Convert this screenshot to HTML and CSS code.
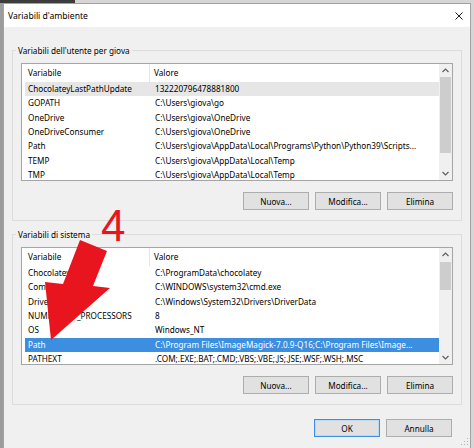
FILE: index.html
```html
<!DOCTYPE html>
<html lang="it">
<head>
<meta charset="utf-8">
<title>Variabili d'ambiente</title>
<link rel="stylesheet" href="styles.css">
</head>
<body>
<div class="window">
  <div class="titlebar">
    <span class="title">Variabili d'ambiente</span>
    <svg class="close" width="8" height="8" viewBox="0 0 8 8"><path d="M0.5 0.5 L7.5 7.5 M7.5 0.5 L0.5 7.5" stroke="#1a1a1a" stroke-width="1" fill="none"/></svg>
  </div>
  <div class="content">
    <fieldset class="group">
      <legend>Variabili dell'utente per giova</legend>
      <div class="list">
        <div class="rows">
          <div class="row head"><span class="c1">Variabile</span><span class="c2">Valore</span></div>
          <div class="row inactive"><span class="c1">ChocolateyLastPathUpdate</span><span class="c2">132220796478881800</span></div>
          <div class="row"><span class="c1">GOPATH</span><span class="c2">C:\Users\giova\go</span></div>
          <div class="row"><span class="c1">OneDrive</span><span class="c2">C:\Users\giova\OneDrive</span></div>
          <div class="row"><span class="c1">OneDriveConsumer</span><span class="c2">C:\Users\giova\OneDrive</span></div>
          <div class="row"><span class="c1">Path</span><span class="c2">C:\Users\giova\AppData\Local\Programs\Python\Python39\Scripts...</span></div>
          <div class="row"><span class="c1">TEMP</span><span class="c2">C:\Users\giova\AppData\Local\Temp</span></div>
          <div class="row"><span class="c1">TMP</span><span class="c2">C:\Users\giova\AppData\Local\Temp</span></div>
        </div>
        <div class="sb">
          <div class="sb-arrow"><svg width="7" height="5" viewBox="0 0 7 5"><polyline points="0.5,4 3.5,1 6.5,4" fill="none" stroke="#606060" stroke-width="1.2"/></svg></div>
          <div class="sb-track"><div class="sb-thumb" style="margin-top:0px;height:76px"></div></div>
          <div class="sb-arrow"><svg width="7" height="5" viewBox="0 0 7 5"><polyline points="0.5,1 3.5,4 6.5,1" fill="none" stroke="#606060" stroke-width="1.2"/></svg></div>
        </div>
      </div>
      <div class="btnrow">
        <button class="btn">Nuova...</button>
        <button class="btn">Modifica...</button>
        <button class="btn">Elimina</button>
      </div>
    </fieldset>

    <fieldset class="group group2">
      <legend>Variabili di sistema</legend>
      <div class="list">
        <div class="rows">
          <div class="row head"><span class="c1">Variabile</span><span class="c2">Valore</span></div>
          <div class="row"><span class="c1">ChocolateyInstall</span><span class="c2">C:\ProgramData\chocolatey</span></div>
          <div class="row"><span class="c1">ComSpec</span><span class="c2">C:\WINDOWS\system32\cmd.exe</span></div>
          <div class="row"><span class="c1">DriverData</span><span class="c2">C:\Windows\System32\Drivers\DriverData</span></div>
          <div class="row"><span class="c1">NUMBER_OF_PROCESSORS</span><span class="c2">8</span></div>
          <div class="row"><span class="c1">OS</span><span class="c2">Windows_NT</span></div>
          <div class="row sel"><span class="c1">Path</span><span class="c2">C:\Program Files\ImageMagick-7.0.9-Q16;C:\Program Files\Image...</span></div>
          <div class="row"><span class="c1">PATHEXT</span><span class="c2">.COM;.EXE;.BAT;.CMD;.VBS;.VBE;.JS;.JSE;.WSF;.WSH;.MSC</span></div>
        </div>
        <div class="sb">
          <div class="sb-arrow"><svg width="7" height="5" viewBox="0 0 7 5"><polyline points="0.5,4 3.5,1 6.5,4" fill="none" stroke="#606060" stroke-width="1.2"/></svg></div>
          <div class="sb-track"><div class="sb-thumb" style="margin-top:1px;height:28px"></div></div>
          <div class="sb-arrow"><svg width="7" height="5" viewBox="0 0 7 5"><polyline points="0.5,1 3.5,4 6.5,1" fill="none" stroke="#606060" stroke-width="1.2"/></svg></div>
        </div>
      </div>
      <div class="btnrow">
        <button class="btn">Nuova...</button>
        <button class="btn">Modifica...</button>
        <button class="btn">Elimina</button>
      </div>
    </fieldset>

    <div class="footer">
      <button class="btn default">OK</button>
      <button class="btn">Annulla</button>
    </div>
  </div>
</div>

<svg class="grip" width="8" height="8" viewBox="0 0 8 8">
  <rect x="6" y="0" width="1" height="1" fill="#b0b0b0"/>
  <rect x="3" y="3" width="1" height="1" fill="#b0b0b0"/>
  <rect x="6" y="3" width="1" height="1" fill="#b0b0b0"/>
  <rect x="0" y="6" width="1" height="1" fill="#b0b0b0"/>
  <rect x="3" y="6" width="1" height="1" fill="#b0b0b0"/>
  <rect x="6" y="6" width="1" height="1" fill="#b0b0b0"/>
</svg>

<div class="step">4</div>
<svg class="arrow" width="75" height="110" viewBox="0 0 75 110">
  <polygon points="40,5 67,16 53,51 70,53 11,105 5,47 23,49" fill="#e8141e"/>
</svg>
</body>
</html>
```

FILE: styles.css
```css
html, body {
  margin: 0;
  padding: 0;
}

body {
  width: 474px;
  height: 448px;
  overflow: hidden;
  position: relative;
  background:
    linear-gradient(#3c3c3c, #3c3c3c) 0 0 / 75px 3px no-repeat,
    linear-gradient(#9c9c9c, #9c9c9c) 0 0 / 3px 100% no-repeat,
    #d6d6d6;
  font-family: "Noto Sans", "DejaVu Sans", sans-serif;
  font-size: 8.2px;
  color: #000;
}

.window {
  margin: 3px 0 0 3px;
  width: 468px;
  height: 445px;
  box-sizing: border-box;
  border: 1px solid #a2a2a2;
  border-bottom: 0;
  background: #f0f0f0;
  display: flex;
  flex-direction: column;
}

.titlebar {
  height: 23px;
  flex: none;
  background: #fff;
  display: flex;
  align-items: center;
  justify-content: space-between;
  padding-left: 4px;
}

.title {
  font-size: 8.6px;
  color: #000;
}

.close {
  margin-right: 7px;
  display: block;
}

.content {
  padding: 17px 8px 0 8px;
}

.group {
  margin: 0;
  border: 1px solid #dcdcdc;
  padding: 6px 8px 10px 8px;
  min-width: 0;
}

.group2 {
  margin-top: 7px;
}

.group legend {
  padding: 0 2px;
  margin-left: -5px;
  line-height: 13px;
  font-size: 8.2px;
}

.list {
  display: flex;
  height: 118px;
  box-sizing: border-box;
  border: 1px solid #a5a5a5;
  background: #fff;
}

.rows {
  flex: 1;
  min-width: 0;
  overflow: hidden;
}

.row {
  display: flex;
  height: 14.33px;
  line-height: 14.33px;
  margin-left: 3px;
  white-space: nowrap;
}

.row.head {
  height: 18px;
  line-height: 18px;
}

.c1 {
  flex: none;
  width: 125px;
  padding-left: 3px;
  box-sizing: border-box;
  overflow: hidden;
}

.head .c1 {
  border-right: 1px solid #e5e5e5;
}

.c2 {
  flex: 1;
  min-width: 0;
  padding-left: 5px;
  overflow: hidden;
}

.head .c2 {
  padding-left: 4px;
}

.row.inactive {
  background: #e6e6e6;
}

.row.sel {
  background: #3b8ee0;
  color: #fff;
}

.sb {
  flex: none;
  width: 13px;
  background: #f0f0f0;
  display: flex;
  flex-direction: column;
}

.sb-arrow {
  height: 13px;
  flex: none;
  display: flex;
  align-items: center;
  justify-content: center;
}

.sb-arrow svg {
  display: block;
}

.sb-track {
  flex: 1;
}

.sb-thumb {
  margin-left: 1px;
  margin-right: 1px;
  background: #cdcdcd;
}

.btnrow {
  display: flex;
  justify-content: flex-end;
  gap: 6px;
  margin-top: 11px;
}

.btn {
  width: 66px;
  height: 18px;
  box-sizing: border-box;
  padding: 0;
  margin: 0;
  border: 1px solid #adadad;
  background: #e1e1e1;
  font-family: inherit;
  font-size: 8.2px;
  color: #000;
  display: flex;
  align-items: center;
  justify-content: center;
}

.btn.default {
  border: 1px solid #3d8fdf;
  box-shadow: inset 0 0 0 1px #bcd9f3;
}

.footer {
  display: flex;
  justify-content: flex-end;
  gap: 6px;
  margin-top: 14px;
  padding-right: 10px;
}

.grip {
  position: absolute;
  right: 5px;
  bottom: 2px;
}

.step {
  position: absolute;
  left: 101px;
  top: 204px;
  font-family: "Liberation Sans", Arial, sans-serif;
  font-size: 44px;
  line-height: 44px;
  color: #e8141e;
}

.arrow {
  position: absolute;
  left: 40px;
  top: 235px;
}
```
